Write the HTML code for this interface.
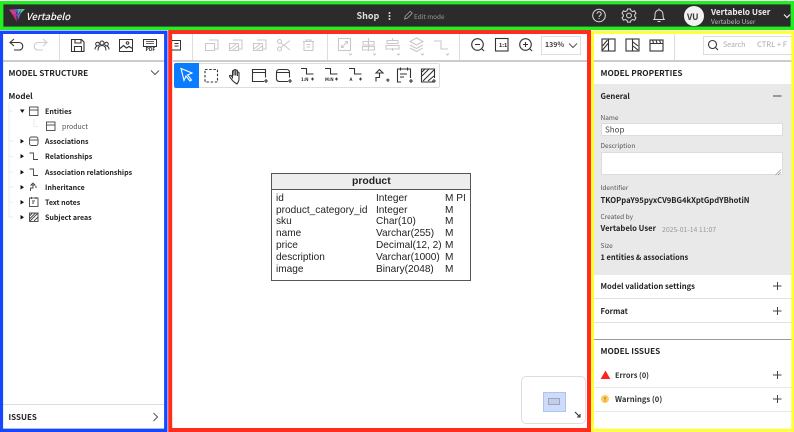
<!DOCTYPE html>
<html>
<head>
<meta charset="utf-8">
<style>
html,body{margin:0;padding:0;background:#fff;}
#p{position:relative;width:794px;height:432px;overflow:hidden;background:#fff;font-family:"Noto Sans CJK JP","Liberation Sans",sans-serif;color:#222;}
.b{position:absolute;box-sizing:border-box;}
.t{position:absolute;white-space:nowrap;line-height:12px;font-size:8px;transform:translateY(-6px);}
.h{font-weight:700;font-size:8.2px;color:#222;}
.s{font-weight:700;transform:translateY(-5px);}
.k{font-weight:700;font-size:7.05px;transform:translateY(-5px);}
.r{font-weight:700;font-size:7.65px;transform:translateY(-5px);}
.l{color:#555;font-size:6.5px;transform:translateY(-6px);}
.e{font-family:"Liberation Sans",Arial,sans-serif;font-size:10.1px;color:#222;transform:translateY(-5px);}
svg{position:absolute;left:0;top:0;}
</style>
</head>
<body>
<div id="p">
<!-- header -->
<div class="b" style="left:2px;top:4px;width:790px;height:23px;background:#2b2b2b;"></div>
<!-- gray panels -->
<div class="b" style="left:594px;top:84px;width:198px;height:191px;background:#e9e9e9;"></div>
<div class="b" style="left:3px;top:60px;width:161px;height:1.5px;background:#ccc;"></div>
<div class="b" style="left:173px;top:60px;width:414px;height:1.5px;background:#ccc;"></div>
<div class="b" style="left:594px;top:60px;width:198px;height:1.5px;background:#ccc;"></div>
<div class="b" style="left:3px;top:404px;width:161px;height:1px;background:#ddd;"></div>
<div class="b" style="left:594px;top:298px;width:198px;height:1px;background:#e2e2e2;"></div>
<div class="b" style="left:594px;top:322px;width:198px;height:1px;background:#e2e2e2;"></div>
<div class="b" style="left:594px;top:338.5px;width:198px;height:1.5px;background:#999;"></div>
<div class="b" style="left:594px;top:387px;width:198px;height:1px;background:#e8e8e8;"></div>
<div class="b" style="left:594px;top:411px;width:198px;height:1px;background:#e8e8e8;"></div>
<!-- separators -->
<div class="b" style="left:59px;top:34px;width:1px;height:26px;background:#ddd;"></div>
<div class="b" style="left:192px;top:34px;width:1px;height:26px;background:#ddd;"></div>
<div class="b" style="left:326.5px;top:34px;width:1px;height:26px;background:#ddd;"></div>
<div class="b" style="left:459px;top:34px;width:1px;height:26px;background:#ddd;"></div>
<div class="b" style="left:674px;top:34px;width:1px;height:26px;background:#ddd;"></div>
<!-- toolbar boxes -->
<div class="b" style="left:174px;top:63px;width:266px;height:25px;border:1px solid #ddd;border-radius:2px;background:#fff;"></div>
<div class="b" style="left:174px;top:63px;width:25px;height:25px;background:#0a7cff;border-radius:2px 0 0 2px;"></div>
<div class="b" style="left:541px;top:36px;width:40px;height:19px;border:1px solid #ddd;"></div>
<div class="b" style="left:703px;top:36px;width:90px;height:19px;border:1px solid #ddd;"></div>
<!-- form -->
<div class="b" style="left:600.5px;top:123px;width:182px;height:13px;background:#fff;border:1px solid #ddd;"></div>
<div class="b" style="left:600.5px;top:152px;width:182px;height:23px;background:#fff;border:1px solid #ddd;"></div>
<!-- entity -->
<div class="b" style="left:271px;top:173px;width:199.5px;height:107.5px;background:#fff;border:1.5px solid #555;"></div>
<div class="b" style="left:272px;top:174px;width:197.5px;height:15.5px;background:#eee;border-bottom:1.5px solid #555;"></div>
<!-- minimap -->
<div class="b" style="left:521px;top:376px;width:65px;height:47.5px;border:1px solid #ddd;border-radius:5px;background:#fff;"></div>
<div class="b" style="left:542.5px;top:392px;width:23px;height:20px;background:#cddcfb;border:1px solid #adc4f3;"></div>
<div class="b" style="left:548px;top:398px;width:11.5px;height:6.5px;background:#c4cfe6;border:1px solid #98a5bf;"></div>

<svg width="794" height="432" viewBox="0 0 794 432" fill="none" stroke="#333" stroke-width="1">
<!-- outlines -->
<rect x="1.7" y="2.7" width="790.6" height="25.6" stroke="#22ee22" stroke-width="3.4"/>
<path d="M1.4 432V32.3H165.8V430.3H1.4" stroke="#1746ff" stroke-width="3.4"/>
<rect x="170.2" y="32" width="418.8" height="398" stroke="#ff2d1e" stroke-width="4"/>
<path d="M592.5 432V32.4H792.8V430.2H592.5" stroke="#ffff33" stroke-width="3"/>

<!-- logo -->
<path d="M9 9.500h4.500l3.500 5.500-2 3z" fill="#d13c8b" stroke="none"/>
<path d="M13.500 9h4l-1.500 5z" fill="#8a4bc9" stroke="none"/>
<path d="M17.500 9h4l-4 6z" fill="#3fb3d8" stroke="none"/>
<path d="M21.500 9H25l-6 6z" fill="#5fd06b" stroke="none"/>
<path d="M12 14h4l1 8z" fill="#c22f7a" stroke="none"/>
<path d="M17 15l4.500-3-3.500 8z" fill="#6c5fd0" stroke="none"/>

<!-- header icons -->
<g fill="#ddd" stroke="none"><circle cx="389.500" cy="13" r="1"/><circle cx="389.500" cy="16" r="1"/><circle cx="389.500" cy="19" r="1"/></g>
<path d="M404.500 19l.8-2.800 5-5 2 2-5 5z" stroke="#999" stroke-width=".9"/>
<circle cx="599" cy="15.500" r="6.300" stroke="#ddd"/>
<path d="M597 13.800c0-2.800 4.200-2.600 4.200 0 0 1.600-2.100 1.600-2.100 3.200M599.100 18v1" stroke="#ddd"/>
<circle cx="629" cy="15.500" r="2.400" stroke="#ddd"/>
<path d="M627.500 9h3l.5 1.800 1.700.8 1.800-.8 1.500 2.500-1.300 1.400v1.700l1.300 1.400-1.500 2.500-1.800-.8-1.700.8-.5 1.800h-3l-.5-1.800-1.700-.8-1.800.8-1.500-2.500 1.300-1.400v-1.700l-1.300-1.400 1.500-2.500 1.800.8 1.700-.8z" stroke="#ddd"/>
<path d="M654 19.500c1.300-1.300 1-3 1-5 0-2.500 1.800-4.500 4-4.500s4 2 4 4.500c0 2 0 3.700 1.200 5zM653.500 19.500h11M657.500 21.500h3M659 8.500V10" stroke="#ddd"/>
<circle cx="694" cy="16" r="10" fill="#f2f2f2" stroke="none"/>
<path d="M784 14.500l3 3 3-3" stroke="#eee" stroke-width="1.200"/>

<!-- left toolbar -->
<path d="M14 39l-4 3.500 4 3.500M10 42.500h9c5 0 5 7.500 0 7.500h-5" stroke="#333" stroke-width="1.100"/>
<path d="M43 39l4 3.500-4 3.500M47 42.500h-9c-5 0-5 7.500 0 7.500h5" stroke="#ccc" stroke-width="1.100"/>
<path d="M71.500 39.500h10l2.500 2.500v9.500h-12.500zM75 39.500v3.500h6v-3.500M74.500 51.500v-5h7v5" stroke="#333" stroke-width="1.100"/>
<circle cx="102" cy="43" r="2"/><circle cx="97.500" cy="44" r="1.800"/><circle cx="106.500" cy="44" r="1.800"/>
<path d="M98 50.500c0-3.500 1.500-5 4-5s4 1.500 4 5M95 49.500c0-2 .8-3 2.300-3.500M109 49.500c0-2-.8-3-2.300-3.500"/>
<rect x="119.500" y="39.500" width="13" height="12"/>
<circle cx="127.500" cy="43" r="1.300"/><path d="M120 48.500l3.500-3 3 2.500 2.500-1.500 3.500 2" stroke-width="1.200"/>
<rect x="143.500" y="39.500" width="13" height="7"/><path d="M146 41.500h8M146 43.500h8" stroke-width=".8"/>
<!-- center toolbar 1 -->
<path d="M172 40.500h8.500v9.500H172M174.500 43.500h4M174.500 46h4" stroke="#333"/>
<g stroke="#c9c9c9" stroke-width="1.100">
<path d="M209 40h9v9h-3M205.500 43.500h9v7h-9z"/>
<path d="M233 40h9v9h-3M229.500 43.500h9v7h-9zM230 49l6-5M233 50l5-4"/>
<path d="M257 40h9v9h-3M253.500 43.500h9v7h-9zM254 49l6-5M257 50l5-4"/>
<circle cx="279.500" cy="41.500" r="2"/><circle cx="279.500" cy="49" r="2"/><path d="M281 43l9 7M281 47.500l9-7"/>
<path d="M303 41.500h11M306 41.500v-1.500h5v1.500M304 41.500h9v9h-9zM306.500 44.500h4M306.500 47h4"/>
<rect x="338.500" y="38.500" width="12" height="12"/><path d="M341.500 47.500l6-6M345 41.500h2.500V44M341.500 45v2.500H344"/>
<path d="M368.500 38v13M363 41.500h11v3.500h-11zM362.500 46.500h12v3.500h-12z"/>
<path d="M392.500 38v3M392.500 48v3M387 40.500h11v3h-11zM386 45.500h13v3.500h-13z"/>
<path d="M416.500 38l6.500 3.500-6.500 3.500-6.500-3.500zM410 45l6.500 3.500 6.500-3.500M410 48l6.500 3.500 6.500-3.500"/>
<path d="M434 41h7v8h7"/>
<path d="M349 53.500l1.500 1.500 1.500-1.500M373 53.500l1.500 1.500 1.500-1.500M397 53.500l1.500 1.500 1.500-1.500M421 53.500l1.500 1.500 1.500-1.500M446 53.500l1.500 1.500 1.500-1.500"/>
</g>
<circle cx="477.500" cy="44.500" r="5.800" stroke-width="1.100"/><path d="M475 44.500h5M482 49l2 2" stroke-width="1.100"/>
<rect x="495.500" y="38.500" width="12.500" height="12.500" stroke-width="1.100"/>
<circle cx="525.500" cy="44.500" r="5.800" stroke-width="1.100"/><path d="M523 44.500h5M525.500 42v5M530 49l2 2" stroke-width="1.100"/>
<path d="M569 43.500l4 4 4-4" stroke="#555"/>
<!-- center toolbar 2 -->
<path d="M181 68.500l11 4.500-4.500 2 4 5-1.500 1-4-5-2 4.500z" stroke="#fff" stroke-width="1.100"/>
<rect x="205" y="69.500" width="12.500" height="12.500" stroke-dasharray="2.500 1.700" stroke-width="1.100"/>
<path d="M234 82c-2-2-4-4-4.500-6 0-1 1.500-1 2 0l1 1.500v-6c0-1.200 1.500-1.200 1.500 0v4-5c0-1.200 1.700-1.200 1.700 0v5-4.500c0-1.200 1.700-1.200 1.700 0v5-3c0-1.200 1.600-1.200 1.600 0v6c0 2-1 3.500-2 5z" stroke-width="1.100"/>
<path d="M264 81.500h-11.500v-12h13v8M252.500 72.500h13M264 81h4M266 79v4" stroke-width="1.100"/>
<path d="M288 81.500h-8.500q-3 0-3-3v-6q0-3 3-3h7q3 0 3 3v5M276.500 72.500h13M288 81h4M290 79v4" stroke-width="1.100"/>
<path d="M301 68.500h5.500v5.500h7" stroke-width="1.100"/>
<path d="M325 68.500h5.500v5.500h7" stroke-width="1.100"/>
<path d="M349 68.500h5.500v5.500h7" stroke-width="1.100"/>
<path d="M376 81.500v-4h3.500v-4.500M376 73l3.500-3.500 3.500 3.500zM386 80h3.500M388 78.500v3.500" stroke-width="1.100"/>
<path d="M401 82h-3.500v-13h13v9M400.500 67.500v3M407.500 67.500v3M400 74h7M400 77h4M409 81h4M411 79v4" stroke-width="1.100"/>
<path d="M433 82h-11.500v-13h13v9M422 72l3-3M422 76l7-7M423 81l11-11M428 81l6-5M432 81h4M434 79v4" stroke-width="1.100"/>
<path d="M311 79h3M312.500 77.500v3M335 79h3M336.500 77.500v3M359 79h3M360.500 77.500v3" stroke-width=".9"/>
<!-- right toolbar -->
<rect x="602" y="39" width="13" height="12" stroke-width="1.100"/><path d="M608.500 39v12M602.500 46l5-6M602.500 50l6-7" stroke-width="1.100"/>
<rect x="626" y="39" width="13" height="12" stroke-width="1.100"/><path d="M632.500 39v12M633 42l5 4M633 46l5 4" stroke-width="1.100"/>
<rect x="650" y="40" width="13" height="11" stroke-width="1.100"/><path d="M650 43.500h13M652.500 40l1 3M656 40l1 3M659.500 40l1 3" stroke-width="1.100"/>
<circle cx="712.500" cy="44.500" r="4" stroke-width="1.100"/><path d="M715.500 47.500l2.500 2.500" stroke-width="1.100"/>
<!-- panel chevrons -->
<path d="M151 70.500l4 4 4-4" stroke="#555"/>
<path d="M153.500 413l4 4-4 4" stroke="#555"/>
<!-- tree -->
<path d="M9 102v115.500M9 111h4M9 141h4M9 156.500h4M9 172h4M9 187h4M9 202h4M9 217h4M34 119v7.500h4" stroke="#e6e6e6" stroke-width=".8"/>
<g fill="#111" stroke="none">
<path d="M20 109.500h4.500l-2.250 3.500z"/>
<path d="M20.500 139v4.500l3.500-2.250z"/><path d="M20.500 154v4.500l3.500-2.250z"/><path d="M20.500 170v4.500l3.500-2.250z"/><path d="M20.500 185v4.500l3.500-2.250z"/><path d="M20.500 200v4.500l3.500-2.250z"/><path d="M20.500 215v4.500l3.500-2.250z"/>
</g>
<g stroke="#444" stroke-width=".9">
<rect x="29.500" y="107" width="8.500" height="8.500"/><path d="M29.500 110h8.500"/>
<rect x="46.500" y="122" width="8.500" height="8.500"/><path d="M46.500 125h8.500"/>
<rect x="29.500" y="137" width="8.500" height="8.500" rx="2"/><path d="M29.500 140h8.500"/>
<path d="M29.500 153h4v6.500h4.500"/>
<path d="M29.500 169h4v6.500h4.500"/>
<path d="M30.500 191v-3h2.500v-3M31 185l2-2 2 2zM35 187h2"/>
<rect x="29.500" y="198" width="8.500" height="8.500"/><path d="M32 201h3M32 203h2M31.500 197v2M36 197v2"/>
<rect x="29.500" y="213" width="8.500" height="8.500"/><path d="M29.500 216l3-3M29.500 219l6-6M30 221l8-8M34 221l4-4"/>
</g>
<!-- plus / minus -->
<path d="M773 96h8.500" stroke="#666" stroke-width="1.200"/>
<path d="M773 286h8.500M777.500 282v8M773 311h8.500M777.500 307v8M773 375h8.500M777.500 371v8M773 399h8.500M777.500 395v8" stroke="#444"/>
<path d="M781 172l-3 3M781 169.500l-5.500 5.500" stroke="#888" stroke-width=".6"/>
<path d="M601.500 378.500l4-7 4 7z" fill="#f22" stroke="#f22"/>
<circle cx="605" cy="399" r="4" fill="#ffcb60" stroke="none"/>
<path d="M605 397v2.500M605 400.500v1" stroke="#a06a00"/>
<path d="M575 412l5 5M580 414v3h-3" stroke="#333" stroke-width="1.100"/>
</svg>

<!-- header text -->
<span class="t" style="left:26px;top:15.500px;color:#fff;font-size:9.600px;font-style:italic;font-weight:500;">Vertabelo</span>
<span class="t" style="left:356.500px;top:15.500px;color:#ddd;font-size:9px;font-weight:700;">Shop</span>
<span class="t" style="left:414px;top:16.500px;color:#999;font-size:6.400px;">Edit mode</span>
<span class="t" style="left:687px;top:16.500px;color:#333;font-size:8.500px;font-weight:700;">VU</span>
<span class="t" style="left:711px;top:12px;color:#eee;font-size:8.200px;font-weight:700;">Vertabelo User</span>
<span class="t" style="left:711px;top:20.500px;color:#bbb;font-size:6.500px;">Vertabelo User</span>
<!-- small icon text -->
<span class="t" style="left:145.500px;top:49.500px;font-size:5px;font-weight:700;">PDF</span>
<span class="t" style="left:499px;top:44.500px;font-size:5.500px;font-weight:700;">1:1</span>
<span class="t" style="left:301px;top:79.500px;font-size:4.500px;font-weight:700;">1:N</span>
<span class="t" style="left:325px;top:79.500px;font-size:4.500px;font-weight:700;">M:N</span>
<span class="t" style="left:349.500px;top:79.500px;font-size:4.500px;font-weight:700;">A</span>
<span class="t" style="left:545px;top:45px;font-size:7px;font-weight:700;color:#444;">139%</span>
<span class="t" style="left:723px;top:45px;font-size:7px;color:#aaa;">Search</span>
<span class="t" style="left:757px;top:45px;font-size:7.600px;color:#aaa;">CTRL + F</span>
<!-- left panel -->
<span class="t h" style="left:8.500px;top:72.500px;">MODEL STRUCTURE</span>
<span class="t s" style="left:8.500px;top:96px;">Model</span>
<span class="t k" style="left:45px;top:111px;">Entities</span>
<span class="t" style="left:62px;top:126px;color:#555;font-size:7px;transform:translateY(-5px);">product</span>
<span class="t k" style="left:45px;top:141px;">Associations</span>
<span class="t k" style="left:45px;top:156px;">Relationships</span>
<span class="t k" style="left:45px;top:172px;">Association relationships</span>
<span class="t k" style="left:45px;top:187px;">Inheritance</span>
<span class="t k" style="left:45px;top:202px;">Text notes</span>
<span class="t k" style="left:45px;top:217px;">Subject areas</span>
<span class="t s" style="left:8.500px;top:417px;">ISSUES</span>
<!-- entity text -->
<span class="t e" style="left:352px;top:181px;font-weight:700;font-size:10.400px;">product</span>
<span class="t e" style="left:276px;top:197.500px;">id</span><span class="t e" style="left:376px;top:197.500px;">Integer</span><span class="t e" style="left:445px;top:197.500px;">M PI</span>
<span class="t e" style="left:276px;top:209.500px;">product_category_id</span><span class="t e" style="left:376px;top:209.500px;">Integer</span><span class="t e" style="left:445px;top:209.500px;">M</span>
<span class="t e" style="left:276px;top:221px;">sku</span><span class="t e" style="left:376px;top:221px;">Char(10)</span><span class="t e" style="left:445px;top:221px;">M</span>
<span class="t e" style="left:276px;top:233px;">name</span><span class="t e" style="left:376px;top:233px;">Varchar(255)</span><span class="t e" style="left:445px;top:233px;">M</span>
<span class="t e" style="left:276px;top:245px;">price</span><span class="t e" style="left:376px;top:245px;">Decimal(12, 2)</span><span class="t e" style="left:445px;top:245px;">M</span>
<span class="t e" style="left:276px;top:256.500px;">description</span><span class="t e" style="left:376px;top:256.500px;">Varchar(1000)</span><span class="t e" style="left:445px;top:256.500px;">M</span>
<span class="t e" style="left:276px;top:268.500px;">image</span><span class="t e" style="left:376px;top:268.500px;">Binary(2048)</span><span class="t e" style="left:445px;top:268.500px;">M</span>
<!-- right panel -->
<span class="t h" style="left:600.500px;top:72.500px;">MODEL PROPERTIES</span>
<span class="t r" style="left:600.500px;top:96px;">General</span>
<span class="t l" style="left:600.500px;top:116.500px;">Name</span>
<span class="t" style="left:605px;top:130px;color:#444;transform:translateY(-5.500px);">Shop</span>
<span class="t l" style="left:600.500px;top:145px;">Description</span>
<span class="t l" style="left:600.500px;top:187px;">Identifier</span>
<span class="t r" style="left:600.500px;top:199.500px;">TKOPpaY95pyxCV9BG4kXptGpdYBhotiN</span>
<span class="t l" style="left:600.500px;top:216px;">Created by</span>
<span class="t r" style="left:600.500px;top:228px;">Vertabelo User</span>
<span class="t" style="left:662px;top:228px;color:#999;font-size:6.900px;transform:translateY(-5px);">2025-01-14 11:07</span>
<span class="t l" style="left:600.500px;top:244.500px;">Size</span>
<span class="t r" style="left:600.500px;top:257px;font-size:7.400px;">1 entities &amp; associations</span>
<span class="t r" style="left:600.500px;top:286px;">Model validation settings</span>
<span class="t r" style="left:600.500px;top:311px;">Format</span>
<span class="t h" style="left:600.500px;top:351px;">MODEL ISSUES</span>
<span class="t r" style="left:615px;top:375px;color:#333;font-size:7.400px;">Errors (0)</span>
<span class="t r" style="left:615px;top:399px;color:#333;">Warnings (0)</span>
</div>
</body>
</html>
